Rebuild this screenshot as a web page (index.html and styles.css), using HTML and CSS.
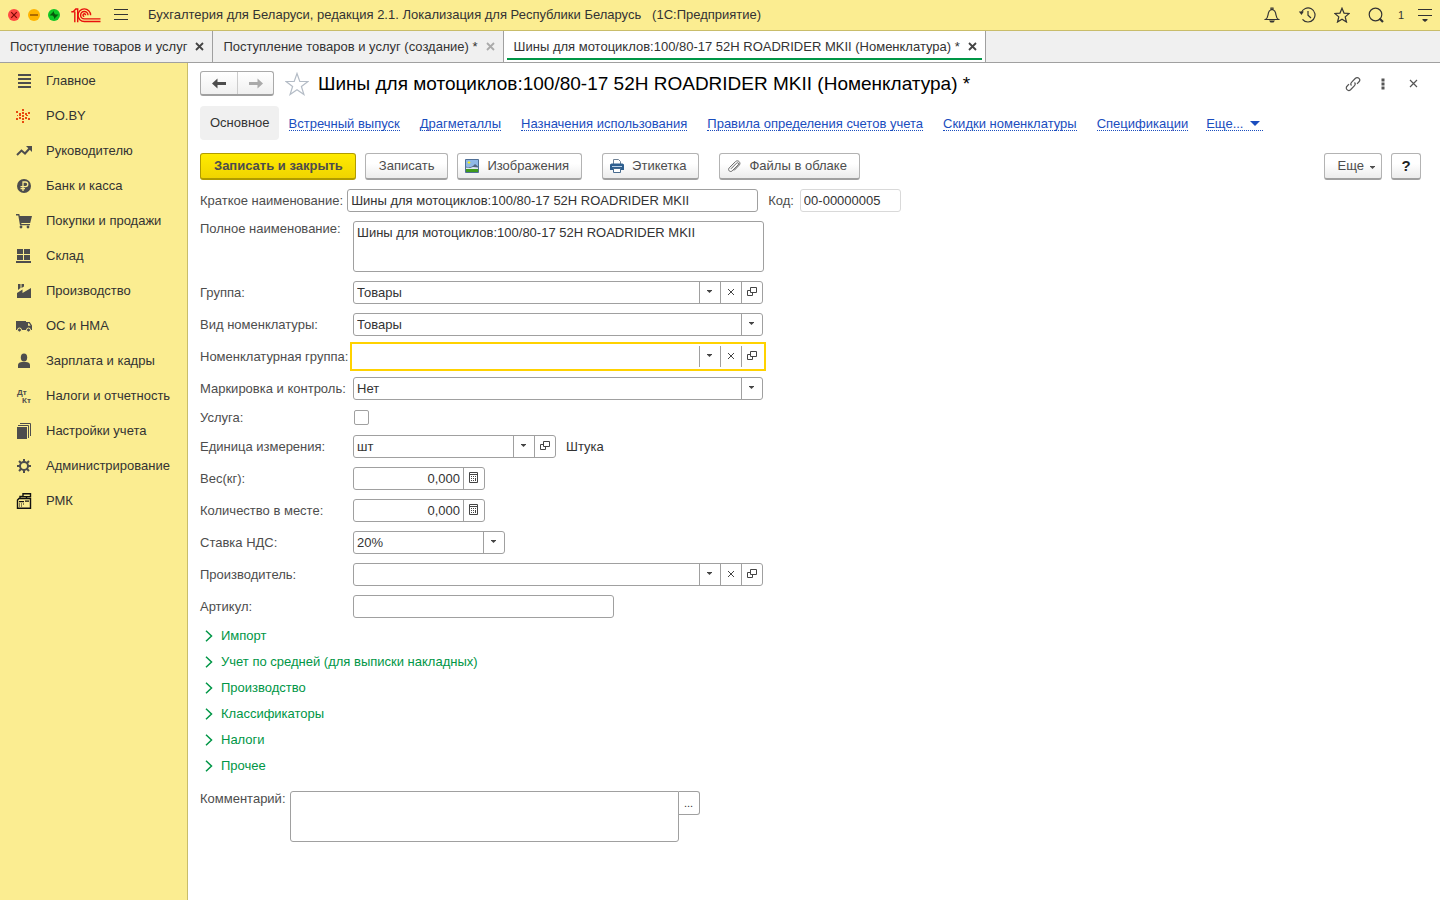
FILE: index.html
```html
<!DOCTYPE html>
<html lang="ru">
<head>
    <meta charset="UTF-8">
    <meta name="viewport" content="width=device-width, initial-scale=1.0">
    <title>Бухгалтерия для Беларуси, редакция 2.1</title>
    <link rel="stylesheet" href="styles.css">
</head>
<body>

    <!-- общие иконки -->
    <svg class="sprite" aria-hidden="true">
        <symbol id="i-caret" viewBox="0 0 5 3"><path d="M0 0h5v.6L2.500 3 0 .6z"/></symbol>
        <symbol id="i-cross" viewBox="0 0 8 8"><path d="M1 1l6 6M7 1L1 7" fill="none" stroke="currentColor"/></symbol>
        <symbol id="i-open" viewBox="0 0 10 10"><path d="M3.5.5h6v5h-6zM3 3.5H.5v5h5V6" fill="none" stroke="currentColor"/></symbol>
        <symbol id="i-calc" viewBox="0 0 9 11"><path d="M.5.5h8v10h-8zM.5 2.5h8" fill="none" stroke="currentColor"/><path d="M2 4h1v1H2zM4 4h1v1H4zM6 4h1v1H6zM2 6h1v1H2zM4 6h1v1H4zM6 6h1v3H6zM2 8h1v1H2zM4 8h1v1H4z"/></symbol>
        <symbol id="i-chevron" viewBox="0 0 8 12"><path d="M1 .8L6.5 6 1 11.2" fill="none" stroke="currentColor" stroke-width="1.5"/></symbol>
    </svg>

    <!-- верхняя панель -->
    <header class="topbar">
        <div class="lights">
            <button class="light red" aria-label="Закрыть окно"><svg viewBox="0 0 12 12"><path d="M3.2 3.2l5.6 5.6M8.8 3.2L3.2 8.8"/></svg></button>
            <button class="light amber" aria-label="Свернуть"><svg viewBox="0 0 12 12"><path d="M2 6h8" stroke-width="1.6"/></svg></button>
            <button class="light green" aria-label="Развернуть"><svg viewBox="0 0 12 12"><path d="M6 2L1.500 6.500h3L6 8zM6 4l1.500 1.500h3L6 10z" class="solid"/></svg></button>
        </div>
        <svg class="logo" viewBox="0 0 30 15">
            <path d="M.3 3.800h2L4.800 1h1.900v13.200M3.800 3.500v10.700"/>
            <path d="M19.600 7.200A6.300 6.300 0 1 0 13.300 13.500H29.500"/>
            <path d="M17 7.200A3.700 3.700 0 1 0 13.300 10.900H29.500"/>
            <path d="M14.600 7.200a1.300 1.300 0 1 0-1.300 1.200"/>
        </svg>
        <button class="icon-btn menu" aria-label="Меню"><svg width="14" height="12" viewBox="0 0 14 12"><path d="M0 .5h14M0 5.500h14M0 10.500h14"/></svg></button>
        <span class="app-name">Бухгалтерия для Беларуси, редакция 2.1. Локализация для Республики Беларусь &nbsp; (1С:Предприятие)</span>
        <div class="top-tools">
            <button class="icon-btn" aria-label="Уведомления"><svg width="16" height="16" viewBox="0 0 16 16"><path d="M1.500 12.500c1.600-1 2.200-2.500 2.500-4.500.3-3 1.200-5 4-5.500 2.800.5 3.700 2.500 4 5.500.3 2 .9 3.500 2.500 4.500zM7 2.500V1h2v1.500"/><path class="solid" d="M5 13.500h6l-1.500 2h-3z"/></svg></button>
            <button class="icon-btn" aria-label="История"><svg width="18" height="16" viewBox="0 0 18 16"><path d="M3.300 6A7 7 0 1 1 4.500 12.300M10 4v4.200l3 2.800"/><path class="solid" d="M.8 4.500h5L3.500 8z"/></svg></button>
            <button class="icon-btn" aria-label="Избранное"><svg width="16" height="16" viewBox="0 0 16 16"><path d="M8 1.200l2 4.900 5.200.4-4 3.400 1.300 5.100L8 12.200 3.500 15l1.300-5.100-4-3.400L6 6.100z"/></svg></button>
            <button class="icon-btn" aria-label="Поиск"><svg width="16" height="16" viewBox="0 0 16 16"><circle cx="7.500" cy="7.500" r="6.300"/><path class="handle" d="M11.500 11.500l3.500 3.500"/></svg></button>
            <span class="count">1</span>
            <button class="icon-btn" aria-label="Настройки"><svg width="14" height="14" viewBox="0 0 14 14"><path d="M0 1.500h14M0 7.500h14"/><path class="solid" d="M4.500 11h5v1L7 14l-2.500-2z"/></svg></button>
        </div>
    </header>

    <!-- вкладки -->
    <div class="tabs">
        <div class="tab"><span class="tab-in">Поступление товаров и услуг <button class="tab-x" aria-label="Закрыть"><svg width="9" height="9" viewBox="0 0 9 9"><path d="M1 1l7 7M8 1L1 8"/></svg></button></span></div>
        <div class="tab"><span class="tab-in">Поступление товаров и услуг (создание) * <button class="tab-x dim" aria-label="Закрыть"><svg width="9" height="9" viewBox="0 0 9 9"><path d="M1 1l7 7M8 1L1 8"/></svg></button></span></div>
        <div class="tab active"><span class="tab-in">Шины для мотоциклов:100/80-17 52H ROADRIDER MKII (Номенклатура) * <button class="tab-x" aria-label="Закрыть"><svg width="9" height="9" viewBox="0 0 9 9"><path d="M1 1l7 7M8 1L1 8"/></svg></button></span></div>
    </div>

    <div class="layout">
        <!-- разделы -->
        <nav class="sidebar">
            <a href="#"><svg viewBox="0 0 16 16"><path d="M2 1h13v2H2zM2 5h13v2H2zM2 9h13v2H2zM2 13h13v2H2z"/></svg>Главное</a>
            <a href="#"><svg viewBox="0 0 16 16" class="poby"><path d="M6 1h2v2H6zM6 4h2v2H6zM6 7h2v2H6zM6 10h2v2H6zM6 13h2v2H6zM3 5h2v2H3zM3 9h2v2H3zM9 5h2v2H9zM9 9h2v2H9zM0 3h2v2H0zM0 10h2v2H0zM1 7h1v1H1zM3 7h2v1H3zM10 7h2v1h-2zM12 4h2v2h-2zM12 10h2v2h-2z"/></svg>PO.BY</a>
            <a href="#"><svg viewBox="0 0 16 16"><path d="M1 12l4.500-4.500 3.500 3 4.500-5" fill="none" stroke="#4d4d4d" stroke-width="2"/><path d="M10 3h6v6z"/></svg>Руководителю</a>
            <a href="#"><svg viewBox="0 0 16 16"><circle cx="8" cy="8" r="7"/><path d="M7 13V4h2.500a2.300 2.300 0 0 1 0 4.600H4.500M4.500 10.700H9" fill="none" stroke="#fbed91" stroke-width="1.300"/></svg>Банк и касса</a>
            <a href="#"><svg viewBox="0 0 16 16"><path d="M0 1h3.300l.5 2H16l-1.800 7H5.200l.3 1H14v1.300H4L2.300 2.500H0z"/><circle cx="5" cy="14" r="1.400"/><circle cx="12" cy="14" r="1.400"/></svg>Покупки и продажи</a>
            <a href="#"><svg viewBox="0 0 16 16"><path d="M1 1h6v5H1zM8 1h6v5H8zM1 7h6v5H1zM8 7h6v5H8zM0 13h15v2H0z"/></svg>Склад</a>
            <a href="#"><svg viewBox="0 0 16 16"><path d="M1 15V10l5.500-3.500V10L15 5v10zM2 1h2.500v4L2 7zM5.500 1H8v2.500L5.500 5z"/></svg>Производство</a>
            <a href="#"><svg viewBox="0 0 16 16"><path d="M0 3h10v9H0z"/><path fill-rule="evenodd" d="M10 4h3.700L16 7.500V12h-6zm2 1.200v2.500h2.600L13 5.200z"/><circle cx="3.500" cy="12" r="2" stroke="#fbed91"/><circle cx="12.500" cy="12" r="2" stroke="#fbed91"/></svg>ОС и НМА</a>
            <a href="#"><svg viewBox="0 0 16 16"><ellipse cx="8" cy="4.500" rx="3.200" ry="4"/><path d="M2 15v-3c0-2 2-2.800 4-3h4c2 .2 4 1 4 3v3z"/></svg>Зарплата и кадры</a>
            <a href="#"><svg viewBox="0 0 16 16" class="dtkt"><text x="1" y="7">Дт</text><text x="6" y="15">Кт</text></svg>Налоги и отчетность</a>
            <a href="#"><svg viewBox="0 0 16 16"><path d="M1 4h10v12H1z"/><path d="M2 2.500h10.500V15M4 .5h10.500V13" fill="none" stroke="#4d4d4d"/></svg>Настройки учета</a>
            <a href="#"><svg viewBox="0 0 16 16"><circle cx="8" cy="8" r="4" fill="none" stroke="#4d4d4d" stroke-width="2"/><path d="M8 1v3M8 12v3M1 8h3M12 8h3M3 3l2.200 2.200M10.800 10.800L13 13M3 13l2.200-2.200M10.800 5.200L13 3" stroke="#4d4d4d" stroke-width="2"/></svg>Администрирование</a>
            <a href="#"><svg viewBox="0 0 16 16"><path d="M7 .8h7.500v2.800H7zM10.500 3.500v2M3 5.500h11.500v9.700h-13V7zM4 5.500v-2h3.500" fill="none" stroke="#111" stroke-width="1.400"/><path d="M3 8h5v1.300H3zM3 10.500h1v1H3zM5 10.500h1v1H5zM7 10.500h1v1H7zM3 12.500h1v1H3zM5 12.500h1v1H5zM9 7.500h4v1.300H9z" fill="#111"/></svg>РМК</a>
        </nav>

        <main class="content">
            <div class="title-row">
                <div class="history">
                    <button aria-label="Назад"><svg width="14" height="11" viewBox="0 0 14 11"><path d="M0 5.500L5.500.5V4H14v3H5.500v3.500z"/></svg></button>
                    <button class="dim" aria-label="Вперед"><svg width="14" height="11" viewBox="0 0 14 11"><path d="M14 5.500L8.500.5V4H0v3h8.500v3.500z"/></svg></button>
                </div>
                <button class="icon-btn fav" aria-label="В избранное"><svg width="24" height="24" viewBox="0 0 24 24"><path d="M12 1.500l2.800 8h8.200l-6.600 5 2.500 8L12 17.700l-6.900 4.800 2.500-8L1 9.500h8.200z"/></svg></button>
                <h1>Шины для мотоциклов:100/80-17 52H ROADRIDER MKII (Номенклатура) *</h1>
                <div class="win-tools">
                    <button class="icon-btn" aria-label="Ссылка"><svg width="16" height="16" viewBox="0 0 16 16"><path d="M6.500 9.500c-1-1-.8-2.300.2-3.300l3.500-3.700c1.200-1.200 2.800-1.200 3.800-.2s1 2.500-.2 3.700l-1.800 1.900M9.500 6.500c1 1 .8 2.300-.2 3.300l-3.500 3.700c-1.200 1.200-2.800 1.200-3.800.2s-1-2.500.2-3.700L4 8.100"/></svg></button>
                    <button class="icon-btn" aria-label="Действия"><svg width="4" height="12" viewBox="0 0 4 12"><path class="solid" d="M.5.500h3v3h-3zM.5 4.500h3v3h-3zM.5 8.500h3v3h-3z"/></svg></button>
                    <button class="icon-btn" aria-label="Закрыть форму"><svg width="9" height="9" viewBox="0 0 9 9"><path d="M1 1l7 7M8 1L1 8"/></svg></button>
                </div>
            </div>

            <nav class="subnav">
                <span class="current">Основное</span>
                <a href="#">Встречный выпуск</a>
                <a href="#">Драгметаллы</a>
                <a href="#">Назначения использования</a>
                <a href="#">Правила определения счетов учета</a>
                <a href="#">Скидки номенклатуры</a>
                <a href="#">Спецификации</a>
                <a href="#" class="more">Еще...<svg width="10" height="5" viewBox="0 0 10 5"><path d="M0 0h10L5 5z"/></svg></a>
            </nav>

            <div class="toolbar">
                <button class="btn primary">Записать и закрыть</button>
                <button class="btn">Записать</button>
                <button class="btn with-icon">
                    <svg width="14" height="14" viewBox="0 0 14 14"><path d="M.5.500h13v13H.5z" fill="#8fb8e6" stroke="#4f6f96"/><path d="M1 7.500l2 1 3-.5 2-1 2-2 3 2.500V10H1z" fill="#52657f"/><path d="M1 8.500l4 .5 3-1 5 .5V10H1z" fill="#dfe8f2"/><path d="M1 10h12v3H1z" fill="#3f9a1c"/><path d="M4 1.500l.6 1.500 1.400.5-1.400.5L4 5.500 3.400 4 2 3.500 3.400 3z" fill="#fff200"/></svg>
                    Изображения
                </button>
                <button class="btn with-icon gap">
                    <svg width="14" height="14" viewBox="0 0 14 14"><path d="M3.500 5V.5h5l2 2V5" fill="#fff" stroke="#6f8296"/><path d="M0 5.500L1.500 4.500h11L14 5.500V11H0z" fill="#2e5f8f"/><path d="M2 7h10v1H2z" fill="#bcd3ea"/><path d="M3.500 9.500h7v4h-7z" fill="#fff" stroke="#476a8e"/></svg>
                    Этикетка
                </button>
                <button class="btn with-icon gap">
                    <svg width="14" height="14" viewBox="0 0 14 14"><path d="M4 9.800l5.500-5.600c1.500-1.300 3 .3 1.700 1.700l-6 6c-2 1.900-4.900-.9-3-3l6.300-6.300c2.600-2.300 6 1.200 3.600 3.700L7 11.500" fill="none" stroke="#666"/></svg>
                    Файлы в облаке
                </button>
                <button class="btn more-btn">Еще<svg width="5" height="3"><use href="#i-caret"/></svg></button>
                <button class="btn help">?</button>
            </div>

            <!-- реквизиты -->
            <form class="form">
                <div class="row">
                    <label for="name" class="auto">Краткое наименование:</label>
                    <span class="field name"><input id="name" type="text" value="Шины для мотоциклов:100/80-17 52H ROADRIDER MKII"></span>
                    <label for="code" class="auto code-label">Код:</label>
                    <span class="field code"><input id="code" type="text" value="00-00000005" readonly></span>
                </div>
                <div class="row top">
                    <label for="fullname">Полное наименование:</label>
                    <textarea id="fullname">Шины для мотоциклов:100/80-17 52H ROADRIDER MKII</textarea>
                </div>
                <div class="row">
                    <label for="group">Группа:</label>
                    <span class="field">
                        <input id="group" type="text" value="Товары">
                        <button type="button" aria-label="Выбрать"><svg width="5" height="3"><use href="#i-caret"/></svg></button>
                        <button type="button" aria-label="Очистить"><svg width="8" height="8"><use href="#i-cross"/></svg></button>
                        <button type="button" aria-label="Открыть"><svg width="10" height="10"><use href="#i-open"/></svg></button>
                    </span>
                </div>
                <div class="row">
                    <label for="kind">Вид номенклатуры:</label>
                    <span class="field select">
                        <select id="kind"><option>Товары</option></select>
                        <span class="drop"><svg width="5" height="3"><use href="#i-caret"/></svg></span>
                    </span>
                </div>
                <div class="row">
                    <label for="nomgroup">Номенклатурная группа:</label>
                    <span class="field focused">
                        <input id="nomgroup" type="text">
                        <button type="button" aria-label="Выбрать"><svg width="5" height="3"><use href="#i-caret"/></svg></button>
                        <button type="button" aria-label="Очистить"><svg width="8" height="8"><use href="#i-cross"/></svg></button>
                        <button type="button" aria-label="Открыть"><svg width="10" height="10"><use href="#i-open"/></svg></button>
                    </span>
                </div>
                <div class="row">
                    <label for="marking">Маркировка и контроль:</label>
                    <span class="field select">
                        <select id="marking"><option>Нет</option></select>
                        <span class="drop"><svg width="5" height="3"><use href="#i-caret"/></svg></span>
                    </span>
                </div>
                <div class="row">
                    <label for="service">Услуга:</label>
                    <input id="service" type="checkbox">
                </div>
                <div class="row">
                    <label for="unit">Единица измерения:</label>
                    <span class="field unit">
                        <input id="unit" type="text" value="шт">
                        <button type="button" aria-label="Выбрать"><svg width="5" height="3"><use href="#i-caret"/></svg></button>
                        <button type="button" aria-label="Открыть"><svg width="10" height="10"><use href="#i-open"/></svg></button>
                    </span>
                    <span class="unit-name">Штука</span>
                </div>
                <div class="row">
                    <label for="weight">Вес(кг):</label>
                    <span class="field number">
                        <input id="weight" type="text" value="0,000">
                        <button type="button" aria-label="Калькулятор"><svg width="9" height="11"><use href="#i-calc"/></svg></button>
                    </span>
                </div>
                <div class="row">
                    <label for="count">Количество в месте:</label>
                    <span class="field number">
                        <input id="count" type="text" value="0,000">
                        <button type="button" aria-label="Калькулятор"><svg width="9" height="11"><use href="#i-calc"/></svg></button>
                    </span>
                </div>
                <div class="row">
                    <label for="vat">Ставка НДС:</label>
                    <span class="field select vat">
                        <select id="vat"><option>20%</option></select>
                        <span class="drop"><svg width="5" height="3"><use href="#i-caret"/></svg></span>
                    </span>
                </div>
                <div class="row">
                    <label for="maker">Производитель:</label>
                    <span class="field">
                        <input id="maker" type="text">
                        <button type="button" aria-label="Выбрать"><svg width="5" height="3"><use href="#i-caret"/></svg></button>
                        <button type="button" aria-label="Очистить"><svg width="8" height="8"><use href="#i-cross"/></svg></button>
                        <button type="button" aria-label="Открыть"><svg width="10" height="10"><use href="#i-open"/></svg></button>
                    </span>
                </div>
                <div class="row">
                    <label for="article">Артикул:</label>
                    <span class="field article"><input id="article" type="text"></span>
                </div>

                <!-- свернутые группы -->
                <div class="groups">
                    <button type="button"><svg width="8" height="12"><use href="#i-chevron"/></svg>Импорт</button>
                    <button type="button"><svg width="8" height="12"><use href="#i-chevron"/></svg>Учет по средней (для выписки накладных)</button>
                    <button type="button"><svg width="8" height="12"><use href="#i-chevron"/></svg>Производство</button>
                    <button type="button"><svg width="8" height="12"><use href="#i-chevron"/></svg>Классификаторы</button>
                    <button type="button"><svg width="8" height="12"><use href="#i-chevron"/></svg>Налоги</button>
                    <button type="button"><svg width="8" height="12"><use href="#i-chevron"/></svg>Прочее</button>
                </div>

                <div class="row top comment">
                    <label for="comment" class="auto">Комментарий:</label>
                    <textarea id="comment"></textarea>
                    <button type="button" class="dots" aria-label="Редактировать комментарий">...</button>
                </div>
            </form>
        </main>
    </div>

</body>
</html>
```

FILE: styles.css
```css
* {
    box-sizing: border-box;
}
body {
    margin: 0;
    min-height: 100vh;
    display: flex;
    flex-direction: column;
    font-family: "Liberation Sans", Arial, sans-serif;
    font-size: 13px;
    line-height: 16px;
    color: #333;
    background-color: #fff;
}
button, input, select, textarea {
    font: inherit;
    color: inherit;
    margin: 0;
}
button {
    padding: 0;
    border: none;
    background: none;
    cursor: pointer;
    display: flex;
    align-items: center;
    justify-content: center;
    white-space: nowrap;
}
svg {
    flex: none;
    fill: currentColor;
}
.sprite {
    display: none;
}
.icon-btn svg {
    fill: none;
    stroke: currentColor;
    stroke-width: 1.2;
}
.icon-btn .solid {
    fill: currentColor;
    stroke: none;
}
.icon-btn .handle {
    stroke-width: 2.2;
}

/* верхняя панель */
.topbar {
    display: flex;
    align-items: center;
    height: 31px;
    padding: 0 8px;
    background-color: #fbed91;
    border-bottom: 1px solid #c9bd6a;
}
.lights {
    display: flex;
    gap: 8px;
}
.light {
    width: 12px;
    height: 12px;
    border-radius: 50%;
}
.light svg {
    width: 12px;
    height: 12px;
    fill: none;
    stroke: currentColor;
    stroke-width: 1.2;
}
.light .solid {
    fill: currentColor;
    stroke: none;
}
.red {
    background-color: #ff4a43;
    color: #7d0a08;
}
.amber {
    background-color: #ffb400;
    color: #9a5a00;
}
.green {
    background-color: #0fc626;
    color: #04590c;
}
.logo {
    width: 30px;
    height: 15px;
    margin-left: 11px;
    fill: none;
    stroke: #e8100c;
    stroke-width: 1.4;
}
.menu {
    margin-left: 13px;
}
.app-name {
    margin-left: 20px;
    white-space: nowrap;
}
.top-tools {
    display: flex;
    align-items: center;
    gap: 18px;
    margin-left: auto;
}
.count {
    font-size: 11px;
    margin: 0 -4px;
}

/* вкладки */
.tabs {
    display: flex;
    height: 32px;
    background-color: #f0f0f0;
    border-bottom: 1px solid #a0a0a0;
}
.tab {
    display: flex;
    padding: 0 3px 2px;
    border-right: 1px solid #a0a0a0;
    white-space: nowrap;
}
.tab-in {
    display: flex;
    align-items: center;
    gap: 8px;
    padding: 4px 5px 0 7px;
    border-bottom: 2px solid transparent;
}
.active {
    background-color: #fff;
}
.active .tab-in {
    border-bottom-color: #009646;
}
.tab-x {
    color: #444;
}
.tab-x.dim {
    color: #aaa;
}
.tab-x svg {
    fill: none;
    stroke: currentColor;
    stroke-width: 1.8;
}

/* разделы */
.layout {
    display: flex;
    flex: 1;
}
.sidebar {
    flex: none;
    width: 188px;
    background-color: #fbed91;
    border-right: 1px solid #c9bd6a;
}
.sidebar a {
    display: flex;
    align-items: center;
    gap: 14px;
    height: 35px;
    padding-left: 16px;
    color: #333;
    text-decoration: none;
    white-space: nowrap;
}
.sidebar svg {
    width: 16px;
    height: 16px;
    color: #4d4d4d;
}
.sidebar .poby {
    color: #e84a10;
}
.dtkt {
    font-size: 8px;
    font-weight: bold;
}

/* форма */
.content {
    flex: 1;
    min-width: 0;
    padding: 8px 19px 20px 12px;
}
.title-row {
    display: flex;
    align-items: center;
    height: 25px;
}
.history {
    display: flex;
    height: 25px;
    border: 1px solid #aaa;
    border-bottom: 2px solid #a0a0a0;
    border-radius: 3px;
    background: linear-gradient(#fff, #f0f0f0);
}
.history button {
    width: 36px;
    color: #4d4d4d;
}
.history .dim {
    color: #aaa;
    border-left: 1px solid #ccc;
}
.fav {
    margin: 0 9px 0 11px;
    color: #b4bcc6;
}
h1 {
    margin: 0;
    font-size: 19px;
    line-height: 24px;
    font-weight: normal;
    color: #000;
    white-space: nowrap;
}
.win-tools {
    display: flex;
    gap: 14px;
    margin-left: auto;
    color: #555;
}
.win-tools .icon-btn {
    width: 16px;
}
.subnav {
    display: flex;
    align-items: center;
    gap: 20px;
    height: 34px;
    margin-top: 10px;
    white-space: nowrap;
}
.subnav .current {
    line-height: 34px;
    padding: 0 9px 0 10px;
    margin-right: -10px;
    background-color: #f0f0f0;
    border-radius: 4px;
}
.subnav a {
    padding-top: 2px;
    color: #1a4dbe;
    text-decoration: none;
    line-height: 12px;
    border-bottom: 1px dotted #1a4dbe;
}
.subnav .more {
    margin-left: -2px;
}
.more svg {
    margin: 0 3px 2px 7px;
}

.toolbar {
    display: flex;
    gap: 9px;
    margin-top: 13px;
}
.btn {
    height: 27px;
    padding: 0 13px;
    border: 1px solid #b3b3b3;
    border-bottom: 2px solid #a0a0a0;
    border-radius: 3px;
    background: linear-gradient(#fff 40%, #ececec);
    color: #4d4d4d;
}
.primary {
    padding: 0 12px 0 13px;
    font-weight: bold;
    background: linear-gradient(#ffeb00, #f0d400);
    border-color: #b09b00;
}
.with-icon {
    gap: 8px;
    padding: 0 12px 0 7px;
}
.gap {
    margin-left: 11px;
}
.more-btn {
    gap: 6px;
    margin-left: auto;
    padding-right: 6px;
}
.more-btn svg {
    margin-top: 3px;
}
.help {
    width: 30px;
    padding: 0;
    font-size: 15px;
    font-weight: bold;
    color: #222;
}

.form {
    display: flex;
    flex-direction: column;
    gap: 9px;
    margin-top: 9px;
}
.row {
    display: flex;
    align-items: center;
}
.row.top {
    align-items: flex-start;
}
label {
    width: 153px;
    color: #4d4d4d;
    white-space: nowrap;
}
label.auto {
    width: auto;
    margin-right: 4px;
}
label.code-label {
    margin: 0 6px 0 10px;
}
.field {
    display: flex;
    width: 410px;
    height: 23px;
    border: 1px solid #a0a0a0;
    border-radius: 3px;
    background-color: #fff;
}
.field input, .field select {
    flex: 1;
    min-width: 0;
    padding: 0 3px;
    border: none;
    background: none;
    outline: none;
    appearance: none;
}
.field button, .drop {
    flex: none;
    width: 21px;
    padding: 0 1px 2px 0;
    border-left: 1px solid #a0a0a0;
    color: #444;
}
.select {
    display: grid;
    grid-template-columns: 1fr 21px;
}
.field.select select {
    grid-column: 1 / 3;
    grid-row: 1;
}
.drop {
    display: flex;
    align-items: center;
    justify-content: center;
    grid-column: 2;
    grid-row: 1;
    pointer-events: none;
}
.focused {
    border-color: transparent;
    border-radius: 0;
    outline: 2px solid #ffd200;
    outline-offset: 1px;
}
.name {
    width: 411px;
}
.code {
    width: 101px;
    border-color: #d9d9d9;
}
.unit {
    width: 203px;
}
.unit-name {
    margin-left: 10px;
}
.number {
    width: 132px;
}
.number input {
    text-align: right;
}
.vat {
    width: 152px;
}
.article {
    width: 261px;
}
textarea {
    display: block;
    width: 411px;
    height: 51px;
    padding: 3px;
    border: 1px solid #a0a0a0;
    border-radius: 3px;
    resize: none;
    outline: none;
}
input[type="checkbox"] {
    appearance: none;
    width: 15px;
    height: 15px;
    margin: 1px;
    border: 1px solid #a0a0a0;
    border-radius: 2px;
}

.groups {
    display: flex;
    flex-direction: column;
    align-items: flex-start;
    margin-top: -4px;
}
.groups button {
    height: 26px;
    gap: 8px;
    padding-left: 5px;
    color: #009646;
}
.comment {
    margin-top: 3px;
}
#comment {
    width: 389px;
    border-top-right-radius: 0;
}
.dots {
    width: 21px;
    height: 24px;
    border: 1px solid #a0a0a0;
    border-left: none;
    border-radius: 0 3px 3px 0;
    font-size: 11px;
}
```
